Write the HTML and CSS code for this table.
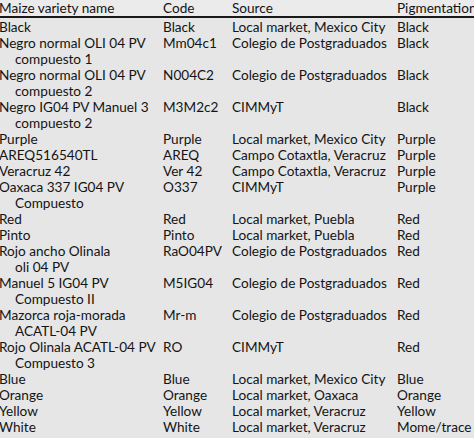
FILE: index.html
```html
<!DOCTYPE html>
<html>
<head>
<meta charset="utf-8">
<link rel="stylesheet" href="styles.css">
</head>
<body>
<div class="table">
  <div class="head">
    <div class="c1">Maize variety name</div><div>Code</div><div>Source</div><div>Pigmentation</div>
  </div>
  <div class="body">
    <div class="c1">Black</div><div>Black</div><div>Local market, Mexico City</div><div>Black</div>
    <div class="c1">Negro normal OLI 04 PV<br>compuesto 1</div><div>Mm04c1</div><div>Colegio de Postgraduados</div><div>Black</div>
    <div class="c1">Negro normal OLI 04 PV<br>compuesto 2</div><div>N004C2</div><div>Colegio de Postgraduados</div><div>Black</div>
    <div class="c1">Negro IG04 PV Manuel 3<br>compuesto 2</div><div>M3M2c2</div><div>CIMMyT</div><div>Black</div>
    <div class="c1">Purple</div><div>Purple</div><div>Local market, Mexico City</div><div>Purple</div>
    <div class="c1">AREQ516540TL</div><div>AREQ</div><div>Campo Cotaxtla, Veracruz</div><div>Purple</div>
    <div class="c1">Veracruz 42</div><div>Ver 42</div><div>Campo Cotaxtla, Veracruz</div><div>Purple</div>
    <div class="c1">Oaxaca 337 IG04 PV<br>Compuesto</div><div>O337</div><div>CIMMyT</div><div>Purple</div>
    <div class="c1">Red</div><div>Red</div><div>Local market, Puebla</div><div>Red</div>
    <div class="c1">Pinto</div><div>Pinto</div><div>Local market, Puebla</div><div>Red</div>
    <div class="c1">Rojo ancho Olinala<br>oli 04 PV</div><div>RaO04PV</div><div>Colegio de Postgraduados</div><div>Red</div>
    <div class="c1">Manuel 5 IG04 PV<br>Compuesto II</div><div>M5IG04</div><div>Colegio de Postgraduados</div><div>Red</div>
    <div class="c1">Mazorca roja-morada<br>ACATL-04 PV</div><div>Mr-m</div><div>Colegio de Postgraduados</div><div>Red</div>
    <div class="c1">Rojo Olinala ACATL-04 PV<br>Compuesto 3</div><div>RO</div><div>CIMMyT</div><div>Red</div>
    <div class="c1">Blue</div><div>Blue</div><div>Local market, Mexico City</div><div>Blue</div>
    <div class="c1">Orange</div><div>Orange</div><div>Local market, Oaxaca</div><div>Orange</div>
    <div class="c1">Yellow</div><div>Yellow</div><div>Local market, Veracruz</div><div>Yellow</div>
    <div class="c1">White</div><div>White</div><div>Local market, Veracruz</div><div>Mome/trace</div>
  </div>
</div>
</body>
</html>
```
FILE: styles.css
```css
html, body {
  margin: 0;
  padding: 0;
  background: #e6e6e6;
}
body {
  width: 474px;
  height: 438px;
  overflow: hidden;
  font-family: Lato, "Liberation Sans", sans-serif;
  font-size: 13.6px;
  line-height: 16px;
  color: #141414;
}
.table {
  margin-left: -1px;
}
.head, .body {
  display: grid;
  grid-template-columns: 164px 69px 165px auto;
}
.head {
  background: #ebebeb;
  border-bottom: 2px solid #1a1a1a;
}
.head > div, .body > div {
  white-space: nowrap;
}
.body {
  padding-top: 1px;
}
.body > .c1 {
  padding-left: 16px;
  text-indent: -16px;
}
```
